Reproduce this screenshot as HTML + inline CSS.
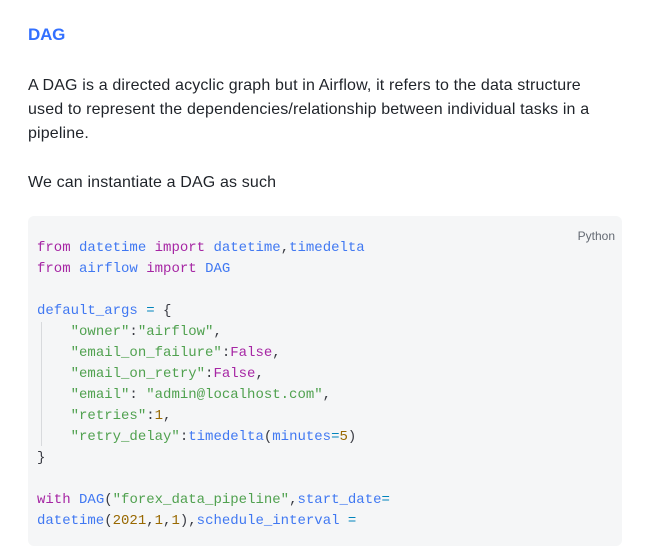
<!DOCTYPE html>
<html><head><meta charset="utf-8"><style>
body{margin:0;background:#fff;width:652px;height:523px;overflow:hidden;font-family:"Liberation Sans",sans-serif;color:#1f2329}
.h{position:absolute;left:28px;top:25px;font-size:17px;font-weight:bold;color:#3370ff;letter-spacing:-0.2px}
.p{position:absolute;left:28px;font-size:16px;line-height:24px;white-space:nowrap;letter-spacing:0.15px}
.code{position:absolute;left:28px;top:216px;width:594px;height:330px;background:#f5f6f7;border-radius:6px}
.lang{position:absolute;right:7px;top:13px;font-size:12px;color:#646a73}
pre{position:absolute;left:9px;top:22px;margin:0;font-family:"Liberation Mono",monospace;font-size:14px;line-height:21px;color:#383a42}
.k{color:#a626a4}.b{color:#4078f2}.s{color:#50a14f}.n{color:#986801}.o{color:#0184bc}
.guide{position:absolute;left:41px;top:322px;width:1px;height:124px;background:#d8dadd}
</style></head><body>
<div class="h">DAG</div>
<div class="p" style="top:74px">A DAG is a directed acyclic graph but in Airflow, it refers to the data structure<br>used to represent the dependencies/relationship between individual tasks in a<br>pipeline.</div>
<div class="p" style="top:171px">We can instantiate a DAG as such</div>
<div class="code"><div class="lang">Python</div>
<pre><span class="k">from</span> <span class="b">datetime</span> <span class="k">import</span> <span class="b">datetime</span>,<span class="b">timedelta</span>
<span class="k">from</span> <span class="b">airflow</span> <span class="k">import</span> <span class="b">DAG</span>

<span class="b">default_args</span> <span class="o">=</span> {
    <span class="s">"owner"</span>:<span class="s">"airflow"</span>,
    <span class="s">"email_on_failure"</span>:<span class="k">False</span>,
    <span class="s">"email_on_retry"</span>:<span class="k">False</span>,
    <span class="s">"email"</span>: <span class="s">"admin@localhost.com"</span>,
    <span class="s">"retries"</span>:<span class="n">1</span>,
    <span class="s">"retry_delay"</span>:<span class="b">timedelta</span>(<span class="b">minutes</span><span class="o">=</span><span class="n">5</span>)
}

<span class="k">with</span> <span class="b">DAG</span>(<span class="s">"forex_data_pipeline"</span>,<span class="b">start_date</span><span class="o">=</span>
<span class="b">datetime</span>(<span class="n">2021</span>,<span class="n">1</span>,<span class="n">1</span>),<span class="b">schedule_interval</span> <span class="o">=</span></pre></div>
<div class="guide"></div>
</body></html>
